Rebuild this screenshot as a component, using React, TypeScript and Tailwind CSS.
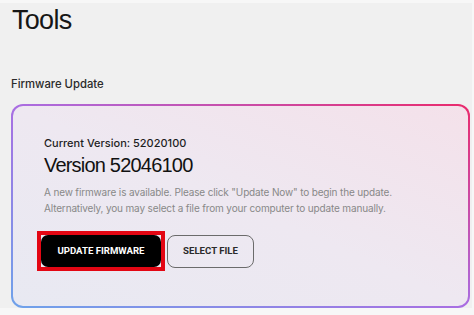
export default function App() {
  return (
    <div className="w-[474px] h-[315px] bg-[#f7f7f7] overflow-hidden">
      <div className="w-[472px] h-[305px] mt-[3px] bg-[#f0f0f0] pt-[1px] pl-[11px] pr-[2px]">
        <h1 className="font-['Liberation_Sans',Arial,sans-serif] text-[27px] leading-[32px] tracking-[-0.7px] text-[#161616] pl-[1px]">
          Tools
        </h1>
        <div className="mt-[40px] font-['Inter',sans-serif] font-medium text-[11.3px] leading-[16px] text-[#2a2a2a]">
          Firmware Update
        </div>
        <div className="mt-[12px] w-[459px] h-[204px] rounded-[12px] p-[2px] bg-[linear-gradient(to_top_right,#6ea2ea,#a96ee2_50%,#ea2a6c)]">
          <div className="w-full h-full rounded-[10px] bg-[linear-gradient(to_top_right,#e8e9f2,#eee8f1_50%,#f4e1ea)] pt-[29px] pl-[31px]">
            <div className="font-['Inter',sans-serif] font-medium text-[11px] leading-[16px] text-[#1e1e1e]">
              Current Version: 52020100
            </div>
            <div className="mt-[2px] font-['Liberation_Sans',Arial,sans-serif] text-[20px] leading-[24px] tracking-[-0.8px] text-[#111]">
              Version 52046100
            </div>
            <div className="mt-[7px] font-['Inter',sans-serif] text-[10px] leading-[16px] tracking-[-0.15px] text-[#888]">
              <div>A new firmware is available. Please click "Update Now" to begin the update.</div>
              <div>Alternatively, you may select a file from your computer to update manually.</div>
            </div>
            <div className="mt-[15px] flex items-center gap-[2px] -ml-[7px]">
              <div className="border-[4px] border-[#e30613]">
                <button className="w-[120px] h-[32px] rounded-[7px] bg-black text-white font-['Roboto',sans-serif] font-bold text-[9.6px]">
                  UPDATE FIRMWARE
                </button>
              </div>
              <button className="w-[87px] h-[33px] rounded-[8px] border-[1.5px] border-[#6b6b6b] bg-transparent text-[#2b2b2b] font-['Roboto',sans-serif] font-bold text-[9.6px]">
                SELECT FILE
              </button>
            </div>
          </div>
        </div>
      </div>
    </div>
  );
}
